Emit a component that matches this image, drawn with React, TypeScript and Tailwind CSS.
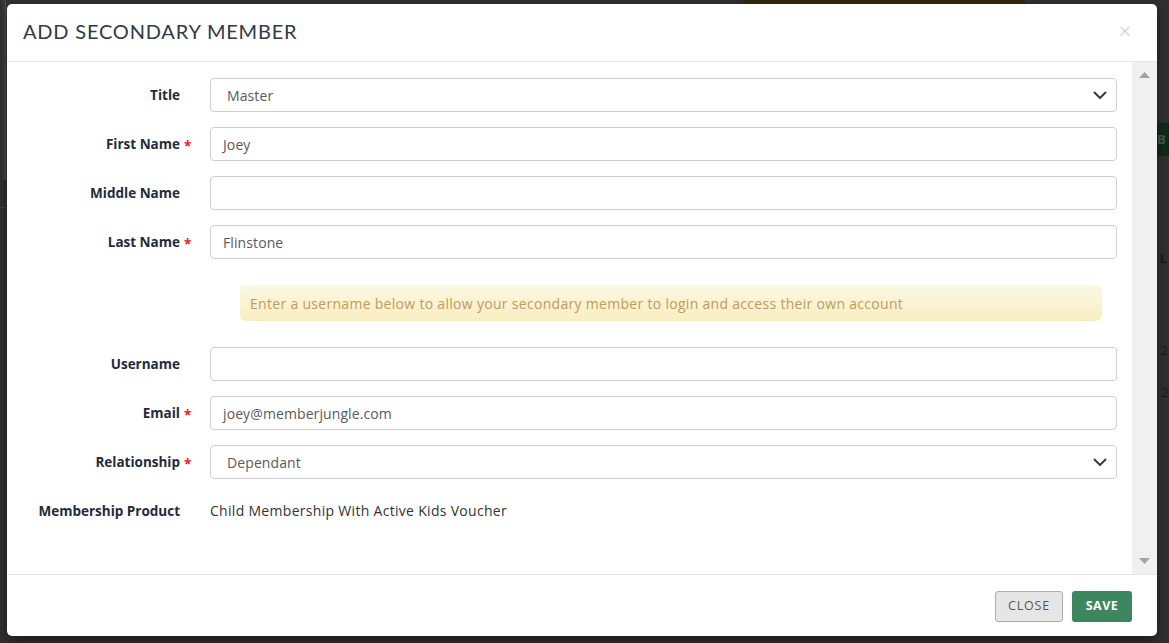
import React from "react";

type Field = {
  label: string;
  value?: string;
  required?: boolean;
  select?: boolean;
};

const nameFields: Field[] = [
  { label: "Title", value: "Master", select: true },
  { label: "First Name", value: "Joey", required: true },
  { label: "Middle Name" },
  { label: "Last Name", value: "Flinstone", required: true },
];

const accountFields: Field[] = [
  { label: "Username" },
  { label: "Email", value: "joey@memberjungle.com", required: true },
  { label: "Relationship", value: "Dependant", required: true, select: true },
];

function Chevron() {
  return (
    <svg width="14" height="9" viewBox="0 0 14 9" fill="none">
      <path d="M1.5 1.5 7 7l5.5-5.5" stroke="#3a3a3a" strokeWidth="2" strokeLinecap="round" strokeLinejoin="round" />
    </svg>
  );
}

function Label({ text, required }: { text: string; required?: boolean }) {
  return (
    <div className="w-[158px] shrink-0 text-right pb-[3px]">
      <span className="relative text-[13.5px] font-bold text-[#1f2b3a]">
        {text}
        {required && (
          <span className="absolute left-full top-[1px] ml-[4px] text-[#e8232b]">*</span>
        )}
      </span>
    </div>
  );
}

function FormRow({ field }: { field: Field }) {
  return (
    <div className="flex items-center gap-[30px] h-[34px]">
      <Label text={field.label} required={field.required} />
      <div className="flex-1 h-full flex items-center justify-between rounded-[4px] border border-[#cfcfcf] bg-white">
        <span
          className={`text-[14px] tracking-[0.1px] text-[#5a5a5a] ${field.select ? "pl-[16px]" : "pl-[12px]"}`}
        >
          {field.value}
        </span>
        {field.select && (
          <span className="pr-[9px] flex items-center">
            <Chevron />
          </span>
        )}
      </div>
    </div>
  );
}

function Scrollbar() {
  return (
    <div className="w-[25px] shrink-0 bg-[#f0f0f0] flex flex-col items-center justify-between py-[10px]">
      <svg width="11" height="6" viewBox="0 0 11 6">
        <path d="M5.5 0 11 6H0z" fill="#a3a3a3" />
      </svg>
      <svg width="11" height="6" viewBox="0 0 11 6">
        <path d="M0 0h11L5.5 6z" fill="#a3a3a3" />
      </svg>
    </div>
  );
}

export default function App() {
  return (
    <div
      className="relative w-[1169px] h-[643px] overflow-hidden bg-[#313131]"
      style={{ fontFamily: "'Open Sans', Lato, sans-serif" }}
    >
      {/* faded page behind the overlay */}
      <div className="absolute left-[743px] top-0 w-[282px] h-[4px] bg-[#33280f]" />
      <div className="absolute left-[2px] top-0 w-[4px] h-[180px] border-r border-[#555] bg-[#3a3a3a]" />
      <div className="absolute left-0 top-[186px] w-[7px] h-[22px] border-b border-[#444]" />
      <div className="absolute left-[1157px] top-[123px] w-[12px] h-[33px] bg-[#122a1b] text-[13px] font-bold text-[#4a5a4f] leading-[33px]">
        B
      </div>
      <div className="absolute left-[1160px] top-[250px] text-[12px] font-bold text-[#1a1a1a]">L</div>
      <div className="absolute left-[1161px] top-[342px] text-[12px] text-[#1a1a1a]">2</div>
      <div className="absolute left-[1162px] top-[384px] text-[12px] text-[#1a1a1a]">2</div>

      {/* modal */}
      <div className="relative ml-[7px] mt-[4px] w-[1150px] h-[632px] bg-white rounded-[5px] flex flex-col shadow-[0_4px_12px_rgba(0,0,0,0.5)]">
        <div className="h-[58px] shrink-0 flex items-center justify-between pl-[16px] pr-[26px] border-b border-[#e5e5e5]">
          <h4
            className="text-[20px] tracking-[0.8px] text-[#2f3a45] -mt-[3px]"
            style={{ fontFamily: "Lato, sans-serif" }}
          >
            ADD SECONDARY MEMBER
          </h4>
          <span className="text-[22px] font-light text-[#c9c9c9] leading-none -mt-[6px]">×</span>
        </div>

        <div className="flex-1 flex min-h-0">
          <div className="flex-1 pt-[16px] pl-[15px] pr-[15px] flex flex-col gap-[15px]">
            {nameFields.map((f) => (
              <FormRow key={f.label} field={f} />
            ))}

            <div className="flex mt-[11px] mb-[11px]">
              <div className="w-[158px] shrink-0" />
              <div className="flex-1 ml-[60px] mr-[15px] h-[36px] rounded-[6px] bg-gradient-to-b from-[#fcf8e3] to-[#f8eec1] flex items-center pl-[10px] text-[14px] tracking-[0.3px] text-[#c29a5b]">
                Enter a username below to allow your secondary member to login and access their own account
              </div>
            </div>

            {accountFields.map((f) => (
              <FormRow key={f.label} field={f} />
            ))}

            <div className="flex items-center gap-[30px] h-[34px]">
              <Label text="Membership Product" />
              <span className="text-[14px] tracking-[0.3px] text-[#333] pb-[2px]">
                Child Membership With Active Kids Voucher
              </span>
            </div>
          </div>
          <Scrollbar />
        </div>

        <div className="h-[62px] shrink-0 border-t border-[#e5e5e5] flex items-center justify-end gap-[9px] pr-[25px] pt-[1px]">
          <button className="h-[31px] w-[68px] rounded-[3px] border border-[#adadad] bg-[#e6e6e6] text-[12.5px] tracking-[0.8px] text-[#555]">
            CLOSE
          </button>
          <button className="h-[31px] w-[60px] rounded-[3px] bg-[#3d8660] text-[12.5px] font-bold tracking-[0.5px] text-white">
            SAVE
          </button>
        </div>
      </div>
    </div>
  );
}
